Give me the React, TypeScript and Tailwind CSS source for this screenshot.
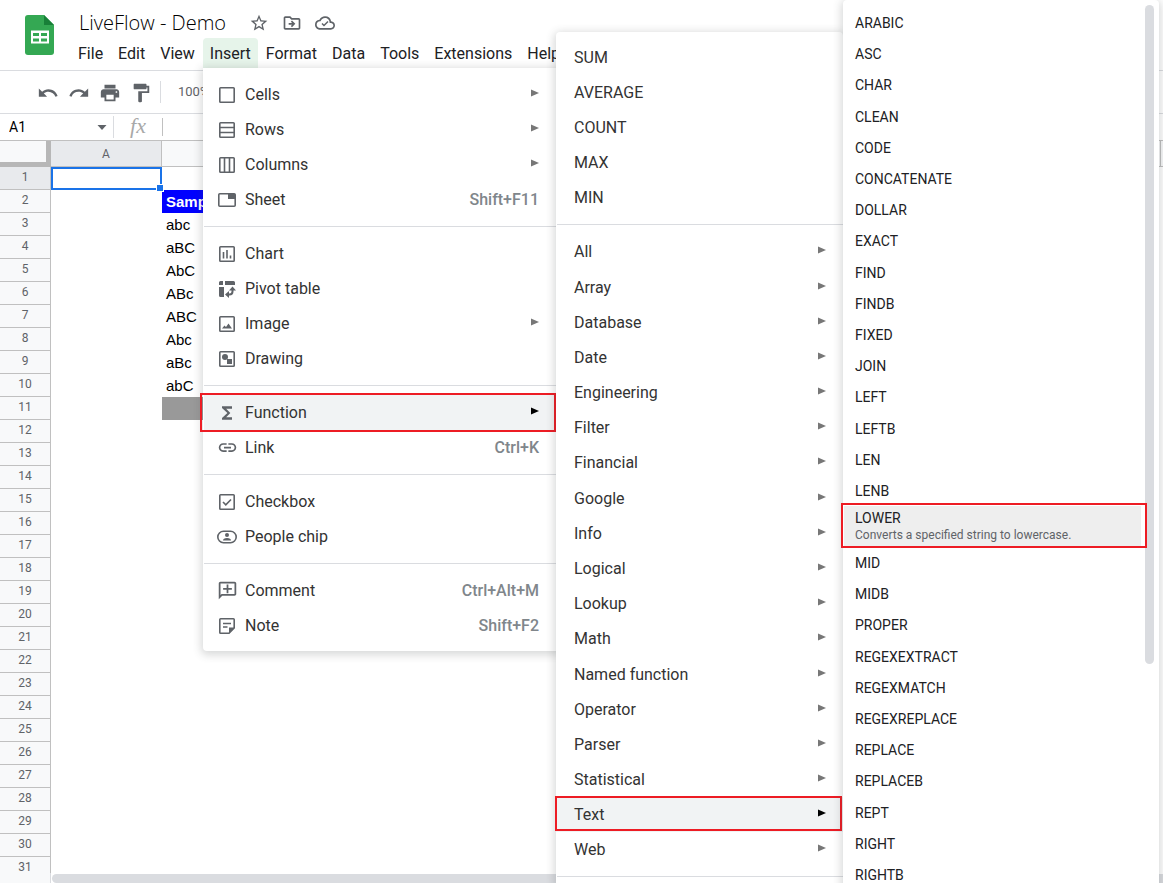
import { FC, ReactNode } from 'react';
import {
  MdCloudQueue,
  MdFormatPaint,
  MdFunctions,
  MdLink,
  MdOutlineAddComment,
  MdOutlineDriveFileMove,
  MdPrint,
  MdRedo,
  MdStarBorder,
  MdUndo,
} from 'react-icons/md';

interface InsertItem {
  label: string;
  icon: ReactNode;
  shortcut?: string;
  submenu?: boolean;
  active?: boolean;
}

const Glyph: FC<{ children: ReactNode }> = ({ children }) => (
  <svg
    width="20"
    height="20"
    viewBox="0 0 20 20"
    fill="none"
    stroke="currentColor"
    strokeWidth="1.6"
    aria-hidden="true"
  >
    {children}
  </svg>
);

const Frame = () => <rect x="2.8" y="2.8" width="14.4" height="14.4" rx="0.8" />;

const insertGroups: InsertItem[][] = [
  [
    { label: 'Cells', icon: <Glyph><Frame /></Glyph>, submenu: true },
    {
      label: 'Rows',
      icon: <Glyph><Frame /><path d="M3 7.5h14M3 12.5h14" /></Glyph>,
      submenu: true,
    },
    {
      label: 'Columns',
      icon: <Glyph><Frame /><path d="M7.5 3v14M12.5 3v14" /></Glyph>,
      submenu: true,
    },
    {
      label: 'Sheet',
      icon: (
        <Glyph>
          <rect x="1.8" y="3.8" width="16.4" height="12.4" rx="1" />
          <path d="M11 4h7v5h-7z" fill="currentColor" stroke="none" />
        </Glyph>
      ),
      shortcut: 'Shift+F11',
    },
  ],
  [
    {
      label: 'Chart',
      icon: <Glyph><Frame /><path d="M6.5 8v6.5M10 6v8.5M13.5 11.5v3" /></Glyph>,
    },
    {
      label: 'Pivot table',
      icon: (
        <Glyph>
          <path
            d="M2 3.5Q2 2 3.5 2H6v4H2zM8 2h8.500Q18 2 18 3.500V6H8zM2 8h5v10H3.500Q2 18 2 16.500z"
            fill="currentColor"
            stroke="none"
          />
          <path d="M15.5 10.500v2q0 3-3 3H11" strokeWidth="2" />
          <path d="M12 11.500l3.500-4 3.500 4zM12 12L8 15.500l4 3.500z" fill="currentColor" stroke="none" />
        </Glyph>
      ),
    },
    {
      label: 'Image',
      icon: (
        <Glyph>
          <Frame />
          <path d="M5 14.500l2.500-3 1.500 1.500 2.500-3.500 3.500 5z" fill="currentColor" stroke="none" />
        </Glyph>
      ),
      submenu: true,
    },
    {
      label: 'Drawing',
      icon: (
        <Glyph>
          <Frame />
          <circle cx="8" cy="8" r="3" fill="currentColor" stroke="none" />
          <path d="M10 10h5v5h-5z" fill="currentColor" stroke="none" />
        </Glyph>
      ),
    },
  ],
  [
    { label: 'Function', icon: <MdFunctions size={20} />, submenu: true, active: true },
    { label: 'Link', icon: <MdLink size={21} />, shortcut: 'Ctrl+K' },
  ],
  [
    { label: 'Checkbox', icon: <Glyph><Frame /><path d="M6 10l2.8 2.8L14 7.5" /></Glyph> },
    {
      label: 'People chip',
      icon: (
        <Glyph>
          <rect x="0.8" y="4.3" width="18.4" height="11.4" rx="5.7" />
          <circle cx="10" cy="8" r="2" fill="currentColor" stroke="none" />
          <path d="M6 13.5q0-2.5 4-2.5t4 2.5z" fill="currentColor" stroke="none" />
        </Glyph>
      ),
    },
  ],
  [
    {
      label: 'Comment',
      icon: <MdOutlineAddComment size={21} className="-scale-x-100" />,
      shortcut: 'Ctrl+Alt+M',
    },
    {
      label: 'Note',
      icon: (
        <Glyph>
          <path d="M3.6 2.8h12.8q.8 0 .8.8V12l-5.2 5.2H3.6q-.8 0-.8-.8V3.6q0-.8.8-.8z" />
          <path d="M6 7.5h8M6 11h4.5" />
          <path d="M17.5 11.5h-5.5v6z" fill="currentColor" stroke="none" />
        </Glyph>
      ),
      shortcut: 'Shift+F2',
    },
  ],
];

const commonFunctions = ['SUM', 'AVERAGE', 'COUNT', 'MAX', 'MIN'];

const categories = [
  'All', 'Array', 'Database', 'Date', 'Engineering', 'Filter', 'Financial', 'Google', 'Info',
  'Logical', 'Lookup', 'Math', 'Named function', 'Operator', 'Parser', 'Statistical', 'Text', 'Web',
];

const textFunctions = [
  'ARABIC', 'ASC', 'CHAR', 'CLEAN', 'CODE', 'CONCATENATE', 'DOLLAR', 'EXACT', 'FIND', 'FINDB',
  'FIXED', 'JOIN', 'LEFT', 'LEFTB', 'LEN', 'LENB', 'LOWER', 'MID', 'MIDB', 'PROPER',
  'REGEXEXTRACT', 'REGEXMATCH', 'REGEXREPLACE', 'REPLACE', 'REPLACEB', 'REPT', 'RIGHT', 'RIGHTB',
];

const menuBar = ['File', 'Edit', 'View', 'Insert', 'Format', 'Data', 'Tools', 'Extensions', 'Help'];

const samples = ['abc', 'aBC', 'AbC', 'ABc', 'ABC', 'Abc', 'aBc', 'abC'];

const Arrow: FC<{ active?: boolean }> = ({ active }) => (
  <svg
    width="8"
    height="8"
    viewBox="0 0 8 8"
    className={`mb-1 ${active ? 'text-black' : 'text-[#777]'}`}
    aria-hidden="true"
  >
    <path d="M0 0.5v7L8 4z" fill="currentColor" />
  </svg>
);

const Header = () => (
  <header className="flex h-[71px] shrink-0 border-b border-[#dadce0]">
    <svg width="29" height="40" viewBox="0 0 29 40" className="ml-[25px] mt-[15px] shrink-0" aria-hidden="true">
      <path d="M3 0h16l10 10v27a3 3 0 0 1-3 3H3a3 3 0 0 1-3-3V3a3 3 0 0 1 3-3z" fill="#34a853" />
      <path d="M19 0l10 10H19z" fill="#188038" />
      <path d="M6 15.5h18v13H6z" fill="#fff" />
      <path d="M8 18h6v3H8zM16 18h6v3h-6zM8 23.5h6v3H8zM16 23.5h6v3h-6z" fill="#34a853" />
    </svg>
    <div className="ml-4 flex flex-col">
      <div className="flex h-[38px] items-center gap-[13px] pl-[9px] pt-2 text-[#5f6368]">
        <h1 className="mr-[10px] whitespace-nowrap font-['Open_Sans',sans-serif] text-xl font-light text-black">
          LiveFlow - Demo
        </h1>
        <button aria-label="Star"><MdStarBorder size={20} /></button>
        <button aria-label="Move"><MdOutlineDriveFileMove size={20} /></button>
        <button aria-label="Document status" className="relative">
          <MdCloudQueue size={20} />
          <svg width="20" height="20" viewBox="0 0 20 20" className="absolute inset-0" aria-hidden="true">
            <path d="M7 10.5l2 2 4-4" fill="none" stroke="currentColor" strokeWidth="1.5" />
          </svg>
        </button>
      </div>
      <nav className="flex h-[30px] gap-px pl-px">
        {menuBar.map((name) => (
          <button
            key={name}
            className={`rounded-t px-[7px] pt-px text-base text-[#202124] ${name === 'Insert' ? 'bg-[#e6f4ea]' : ''}`}
          >
            {name}
          </button>
        ))}
      </nav>
    </div>
  </header>
);

const Toolbar = () => (
  <div className="flex h-[43px] shrink-0 items-center border-b border-[#dadce0] pl-[37px] text-[#5f6368]">
    <div className="flex gap-[9px] pt-px">
      <button aria-label="Undo"><MdUndo size={22} /></button>
      <button aria-label="Redo"><MdRedo size={22} /></button>
      <button aria-label="Print"><MdPrint size={22} /></button>
      <button aria-label="Paint format"><MdFormatPaint size={22} /></button>
    </div>
    <div className="ml-2 h-[22px] w-px bg-[#dadce0]" />
    <button className="ml-[17px] text-[13px]">100%</button>
  </div>
);

const FormulaBar = () => (
  <div className="flex h-[27px] shrink-0 items-center border-b border-[#c0c0c0]">
    <input
      aria-label="Name box"
      defaultValue="A1"
      className="w-[97px] bg-transparent pl-[9px] text-sm text-black outline-none"
    />
    <button aria-label="Named ranges" className="text-[#5f6368]">
      <svg width="10" height="5" viewBox="0 0 10 5"><path d="M0.5 0h9L5 5z" fill="currentColor" /></svg>
    </button>
    <div className="ml-[6px] h-[22px] w-px bg-[#dadce0]" />
    <label
      htmlFor="formula"
      className="w-12 pb-1 text-center font-['Liberation_Serif',serif] text-[22px] italic text-[#a8a8a8]"
    >
      fx
    </label>
    <div className="h-[18px] w-px bg-[#c0c0c0]" />
    <input id="formula" className="min-w-0 flex-1 bg-transparent px-2 outline-none" />
  </div>
);

const Sheet = () => (
  <div className="min-h-0 flex-1 overflow-hidden">
    <table className="w-full table-fixed border-separate border-spacing-0">
      <colgroup>
        <col className="w-[51px]" />
        <col className="w-[111px]" />
        <col className="w-[111px]" />
        <col />
        <col className="w-[2px]" />
      </colgroup>
      <thead>
        <tr className="h-[26px] text-xs text-[#5f6368]">
          <th className="border-b-[5px] border-r-[5px] border-[#b7b7b7] bg-[#f8f9fa] p-0" />
          <th className="border-b border-r border-[#c0c0c0] bg-[#e8eaed] p-0 font-normal">A</th>
          <th className="border-b border-r border-[#c0c0c0] bg-[#f8f9fa] p-0 font-normal">B</th>
          <th className="border-b border-r border-[#c0c0c0] bg-[#f8f9fa] p-0" />
          <th className="border-b border-[#c0c0c0] bg-[#f8f9fa] p-0" />
        </tr>
      </thead>
      <tbody>
        {Array.from({ length: 31 }, (_, i) => i + 1).map((row) => (
          <tr key={row} className="h-[23px]">
            <th
              className={`border-b border-r border-[#c0c0c0] p-0 pb-[2px] text-xs font-normal leading-[12px] text-[#5f6368] ${
                row === 1 ? 'bg-[#e8eaed]' : 'bg-[#f8f9fa]'
              }`}
            >
              {row}
            </th>
            <td className="relative p-0">
              {row === 1 && (
                <div className="absolute inset-0 border-2 border-[#1a73e8]">
                  <span className="absolute -bottom-1 -right-1 z-10 size-2 border border-white bg-[#1a73e8]" />
                </div>
              )}
            </td>
            <td
              className={`p-0 pl-1 font-['Liberation_Sans',Arial,sans-serif] text-[15px] leading-[22px] ${
                row === 2 ? 'bg-[#00f] font-bold text-white' : row === 11 ? 'bg-[#999]' : 'text-black'
              }`}
            >
              {row === 2 ? 'Sample' : samples[row - 3]}
            </td>
            <td className="p-0" colSpan={2} />
          </tr>
        ))}
      </tbody>
    </table>
  </div>
);

const InsertMenu = () => (
  <div
    role="menu"
    aria-label="Insert"
    className="absolute left-[203px] top-[68px] w-[360px] rounded-b bg-white pb-2 pt-[9px] shadow-[0_2px_8px_2px_rgba(60,64,67,0.2)]"
  >
    {insertGroups.map((group, index) => (
      <div
        key={group[0].label}
        className={`ml-px ${index > 0 ? 'mt-[9px] border-t border-[#dadce0] pt-[9px]' : ''}`}
      >
        {group.map((item) => (
          <button
            key={item.label}
            role="menuitem"
            className={`relative flex h-[35px] w-full items-center pl-[11px] pr-6 text-base text-[#333] ${
              item.active ? 'bg-[#f1f3f4]' : ''
            }`}
          >
            <span className="flex w-6 justify-center text-[#5f6368]">{item.icon}</span>
            <span className="ml-[6px]">{item.label}</span>
            <span className="ml-auto font-medium text-[#80868b]">{item.shortcut}</span>
            {item.submenu && <Arrow active={item.active} />}
            {item.active && <span className="absolute -inset-y-[2px] -left-1 right-[7px] border-2 border-[#ed1c24]" />}
          </button>
        ))}
      </div>
    ))}
  </div>
);

const menuRow =
  'relative flex min-h-0 w-full flex-1 items-center pl-[18px] pr-[17px] pt-[2px] text-base text-[#333]';

const FunctionMenu = () => (
  <div
    role="menu"
    aria-label="Function"
    className="absolute bottom-0 left-[556px] top-8 flex w-[287px] flex-col rounded-t bg-white pt-[7px] shadow-[0_2px_8px_2px_rgba(60,64,67,0.2)]"
  >
    {commonFunctions.map((name) => (
      <button key={name} role="menuitem" className={menuRow}>{name}</button>
    ))}
    <hr className="my-[9px] ml-px border-[#dadce0]" />
    {categories.map((name) => (
      <button key={name} role="menuitem" className={`${menuRow} ${name === 'Text' ? 'bg-[#f1f3f4]' : ''}`}>
        {name}
        <span className="ml-auto"><Arrow active={name === 'Text'} /></span>
        {name === 'Text' && (
          <span className="absolute -left-px -top-px bottom-px right-px border-2 border-[#ed1c24]" />
        )}
      </button>
    ))}
    <hr className="mb-[6px] ml-px mt-[9px] border-[#dadce0]" />
  </div>
);

const TextFunctionMenu = () => (
  <div
    role="menu"
    aria-label="Text"
    className="absolute -bottom-[7px] left-[843px] right-1 top-0 flex flex-col rounded-t bg-white pt-[7px] shadow-[0_2px_8px_2px_rgba(60,64,67,0.2)]"
  >
    {textFunctions.map((name) =>
      name === 'LOWER' ? (
        <button
          key={name}
          role="menuitem"
          className="relative ml-px mr-[18px] flex h-[41px] shrink-0 flex-col justify-center bg-[#eee] pl-[11px] text-left"
        >
          <span className="text-sm leading-[18px] text-[#202124]">{name}</span>
          <span className="text-xs leading-[17px] text-[#5f6368]">Converts a specified string to lowercase.</span>
          <span className="absolute -bottom-px -left-[3px] -right-[6px] -top-[3px] z-10 border-2 border-[#ed1c24]" />
        </button>
      ) : (
        <button
          key={name}
          role="menuitem"
          className="flex min-h-0 flex-1 items-center pl-3 pt-px text-sm text-[#202124]"
        >
          {name}
        </button>
      ),
    )}
    <div className="absolute right-[5px] top-[5px] h-[74%] w-[9px] rounded-full bg-[#dadce0]" />
  </div>
);

export default function App() {
  return (
    <div className="relative flex h-screen flex-col overflow-hidden bg-white font-[Roboto,sans-serif]">
      <Header />
      <Toolbar />
      <FormulaBar />
      <Sheet />
      <div className="flex h-[10px] shrink-0">
        <div className="w-[51px] border-r border-[#dadce0] bg-[#f8f9fa]" />
        <div className="ml-px mt-px flex-1 rounded-l-full bg-[#dadce0]" />
      </div>
      <InsertMenu />
      <FunctionMenu />
      <TextFunctionMenu />
    </div>
  );
}
